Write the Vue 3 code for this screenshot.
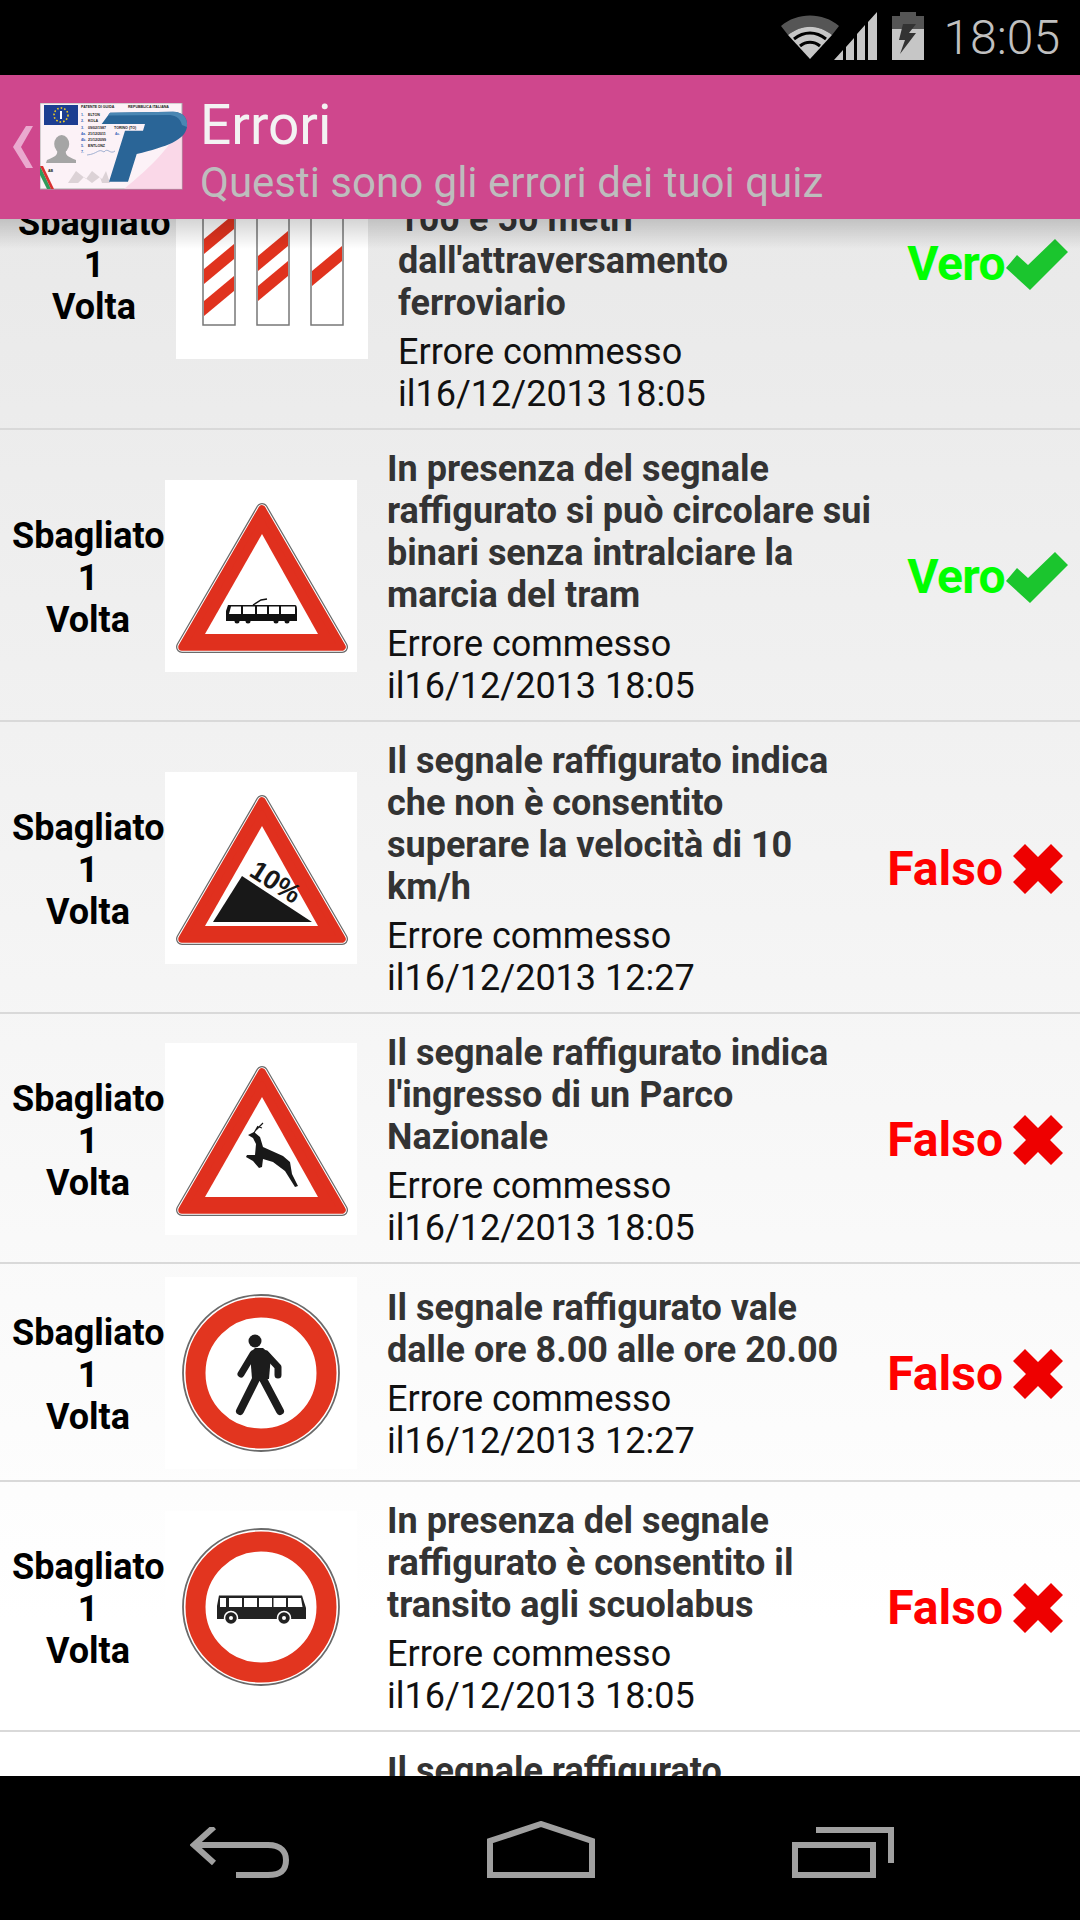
<script setup>
const rows = [
  { id: 1, first: true, sign: 'posts', title: 'Il segnale raffigurato indica\nche il passaggio a livello è tra\n100 e 50 metri\ndall\'attraversamento\nferroviario', date: '18:05', ok: true },
  { id: 2, sign: 'tram', title: 'In presenza del segnale\nraffigurato si può circolare sui\nbinari senza intralciare la\nmarcia del tram', date: '18:05', ok: true },
  { id: 3, sign: 'slope', title: 'Il segnale raffigurato indica\nche non è consentito\nsuperare la velocità di 10\nkm/h', date: '12:27', ok: false },
  { id: 4, sign: 'deer', title: 'Il segnale raffigurato indica\nl\'ingresso di un Parco\nNazionale', date: '18:05', ok: false },
  { id: 5, sign: 'walker', title: 'Il segnale raffigurato vale\ndalle ore 8.00 alle ore 20.00', date: '12:27', ok: false },
  { id: 6, sign: 'bus', title: 'In presenza del segnale\nraffigurato è consentito il\ntransito agli scuolabus', date: '18:05', ok: false },
  { id: 7, sign: 'none', title: 'Il segnale raffigurato', date: '', ok: false, tail: true }
]
const posts = [
  { x: 27, ys: [72, 102, 134] },
  { x: 81, ys: [89, 119] },
  { x: 135, ys: [104] }
]
const stripe = (x, y) => `M${x + 1} ${y} L${x + 31} ${y - 25} V${y - 10} L${x + 1} ${y + 15} Z`
</script>

<template>
  <div class="page">
    <div class="status">
      <svg class="st-wifi" width="58" height="44" viewBox="0 0 58 44">
        <path d="M0 11 C16 -3 42 -3 58 11 L51 20 C37 9 21 9 7 20 Z" fill="#555" />
        <path d="M7 20 C21 9 37 9 51 20 L29 44 Z" fill="#c6c6c6" />
        <path d="M13 24 C23 16 35 16 45 24 M19 31 C25 26 33 26 39 31" fill="none" stroke="#000" stroke-width="3" />
      </svg>
      <svg class="st-signal" width="44" height="48" viewBox="0 0 44 48">
        <path d="M0 48 L9 38 V48 Z M12 35 L20 26 V48 H12 Z M23 22 L31 13 V48 H23 Z M34 10 L43 0 V48 H34 Z" fill="#c6c6c6" />
      </svg>
      <svg class="st-batt" width="32" height="48" viewBox="0 0 32 48">
        <path d="M8 0 H24 V4 H32 V17 H0 V4 H8 Z" fill="#555" />
        <path d="M0 17 H32 V48 H0 Z" fill="#c6c6c6" />
        <path d="M24 12 L11 12 L7 28 L13 28 L8 42 L24 21 L17 21 Z" fill="#333" />
      </svg>
      <span class="clock">18:05</span>
    </div>

    <div class="bar">
      <svg class="chev" width="20" height="42" viewBox="0 0 20 42">
        <path d="M20 0 L8 21 L20 42 H13 L0 21 L13 0 Z" fill="#eaa9cf" />
      </svg>
      <svg class="logo" width="148" height="88" viewBox="0 0 148 88">
        <rect x="0" y="0" width="142" height="86" fill="#fcf2f7" stroke="#aaa" stroke-width="1" />
        <path d="M84 86 C108 66 126 50 142 22 V86 Z" fill="#f9cfe3" opacity=".75" />
        <rect x="4" y="2" width="34" height="20" fill="#1d3e91" />
        <circle cx="21" cy="12" r="7" fill="none" stroke="#f4d020" stroke-width="1.6" stroke-dasharray="1.6 2" />
        <rect x="20" y="8" width="2" height="8" fill="#fff" />
        <text x="41" y="4.5" class="lt">PATENTE DI GUIDA</text>
        <text x="88" y="4.5" class="lt">REPUBBLICA ITALIANA</text>
        <text x="41" y="12.5" class="lt n">1.</text><text x="48" y="12.5" class="lt">ELTON</text>
        <text x="41" y="18.5" class="lt n">2.</text><text x="48" y="18.5" class="lt">KOLA</text>
        <text x="41" y="25.5" class="lt n">3.</text><text x="48" y="25.5" class="lt">09/02/1987</text>
        <text x="74" y="25.5" class="lt">TORINO (TO)</text>
        <text x="41" y="31.5" class="lt n">4a.</text><text x="48" y="31.5" class="lt">21/12/2011</text>
        <text x="75" y="31.5" class="lt n">4c.</text>
        <text x="41" y="37.5" class="lt n">4b.</text><text x="48" y="37.5" class="lt">21/12/2099</text>
        <text x="41" y="43.5" class="lt n">5.</text><text x="48" y="43.5" class="lt">ENTLONZ</text>
        <text x="41" y="50" class="lt n">7.</text>
        <path d="M47 52 C58 51 58 45 64 49 C68 44 70 52 75 48" fill="none" stroke="#8aa0c8" stroke-width=".8" />
        <ellipse cx="21.7" cy="41" rx="7.5" ry="9" fill="#a5a5a5" />
        <path d="M17 47 C18 52 16 53 7 57 L6 60 H36 L36 57 C27 53 25 52 26 47 Z" fill="#a5a5a5" />
        <text x="8" y="69" class="lt">AB</text>
        <path d="M0 63 L11 86 H7 L0 72 Z" fill="#2f9a5a" />
        <path d="M0 63 L3 63 L14 86 H11 Z" fill="#d83030" />
        <path d="M28 80 L36 68 L46 76 L52 68 L62 76 L66 68 L70 80 H62 L60 74 L52 80 L44 74 L38 80 Z" fill="#dcd2d6" />
        <path d="M61.7 21 L70 9.7 L133 8.7 C143 8.7 148 15 147 24 C145 37 127 43.7 96.7 51 L88 78.7 L69 78.7 L85 27.7 L103 27.7 L105 21 Z" fill="#2a6597" />
        <path d="M70 9.7 L133 8.7 C143 8.7 148 15 147 24 L142 22 C140 14 134 12 128 12 L68 12.500 Z" fill="#4a86b3" />
      </svg>
      <div class="titles">
        <div class="t1">Errori</div>
        <div class="t2">Questi sono gli errori dei tuoi quiz</div>
      </div>
    </div>

    <div class="list">
      <div class="shade"></div>
      <div class="scroll">
        <div v-for="r in rows" :key="r.id" class="row" :class="{ first: r.first, tail: r.tail }">
          <template v-if="!r.tail">
            <div class="count">Sbagliato<br />1<br />Volta</div>
            <svg class="sign" width="192" height="192" viewBox="0 0 192 192">
              <rect width="192" height="192" fill="#fff" />
              <g v-if="r.sign === 'posts'">
                <g v-for="p in posts" :key="p.x">
                  <rect :x="p.x" y="8" width="32" height="150" fill="#fff" stroke="#777" stroke-width="1.5" />
                  <path v-for="y in p.ys" :key="y" :d="stripe(p.x, y)" fill="#e0331e" />
                </g>
              </g>
              <g v-else-if="['tram', 'slope', 'deer'].includes(r.sign)">
                <path d="M97 29 L177 167 H17 Z" fill="#6a6a6a" stroke="#6a6a6a" stroke-width="12" stroke-linejoin="round" />
                <path d="M97 29 L177 167 H17 Z" fill="#fff" stroke="#fff" stroke-width="9.500" stroke-linejoin="round" />
                <path d="M97 29 L177 167 H17 Z" fill="#e0301e" stroke="#e0301e" stroke-width="7.500" stroke-linejoin="round" />
                <path d="M97 54 L153 154 H40 Z" fill="#fff" />
                <g v-if="r.sign === 'tram'">
                  <path d="M63 125 H130 C132 125 132 128 132 132 V141 H61 V131 Z" fill="#111" />
                  <path d="M66 126.500 H76 V134 H64 Z M78 126.500 H90 V134 H78 Z M92 126.500 H102 V134 H92 Z M104 126.500 H114 V134 H104 Z M116 126.500 H130 V134 H116 Z" fill="#fff" />
                  <path d="M88 125 L96 120 L102 119" fill="none" stroke="#111" stroke-width="1.400" />
                  <circle cx="72" cy="141" r="2.500" fill="#111" /><circle cx="83" cy="141" r="2.500" fill="#111" />
                  <circle cx="111" cy="141" r="2.500" fill="#111" /><circle cx="122" cy="141" r="2.500" fill="#111" />
                </g>
                <g v-else-if="r.sign === 'slope'">
                  <path d="M77 104 L147 150 H48 Z" fill="#181818" />
                  <text x="83" y="103" class="pct" transform="rotate(33 83 103)">10%</text>
                </g>
                <g v-else>
                  <path d="M83 92 L89 89 L95 94 L98 104 L118 113 L125 119 L127 131 L133 143 L130 144 L120 128 L108 119 L98 116 L97 124 L94 125 L88 118 L81 114 L82 112 L90 112 L91 101 L88 95 Z" fill="#181818" />
                  <path d="M89 90 L93 83 M91 87 L98 80 M94 84 L97 85" fill="none" stroke="#181818" stroke-width="1.200" />
                </g>
              </g>
              <g v-else>
                <circle cx="96" cy="96" r="78" fill="#fff" stroke="#6a6a6a" stroke-width="1.800" />
                <circle cx="96" cy="96" r="65.500" fill="none" stroke="#e2351f" stroke-width="20" />
                <g v-if="r.sign === 'walker'">
                  <circle cx="90" cy="64" r="6.500" fill="#1c1c1c" />
                  <path d="M88 77 L76 97 M101 77 L113 90 L113 98" fill="none" stroke="#1c1c1c" stroke-width="7" stroke-linecap="round" stroke-linejoin="round" />
                  <path d="M90 71 H98 L106 78 L104 102 H87 L85 76 Z" fill="#1c1c1c" />
                  <path d="M92 100 L75 134 M97 100 L115 134" fill="none" stroke="#1c1c1c" stroke-width="8" stroke-linecap="round" />
                </g>
                <g v-else>
                  <path d="M54 84.500 H137 L141 97 V108 H52 V95 Z" fill="#222" />
                  <path d="M55 87 H61 V96 H55 Z M64 87 H77 V96 H64 Z M79 87 H92 V96 H79 Z M94 87 H107 V96 H94 Z M108.500 87 H121 V96 H108.500 Z M123 87 H136 L137.500 96 H123 Z" fill="#fff" />
                  <circle cx="66" cy="107" r="6.500" fill="#222" stroke="#fff" stroke-width="1.500" /><circle cx="66" cy="107" r="2" fill="#fff" />
                  <circle cx="119" cy="107" r="6.500" fill="#222" stroke="#fff" stroke-width="1.500" /><circle cx="119" cy="107" r="2" fill="#fff" />
                </g>
              </g>
            </svg>
          </template>
          <div v-else class="count ghost"></div>
          <div class="info">
            <div class="title">{{ r.title }}</div>
            <div v-if="!r.tail" class="date">Errore commesso<br />il16/12/2013 {{ r.date }}</div>
          </div>
          <div v-if="!r.tail" class="verdict" :class="r.ok ? 'yes' : 'no'">
            <span>{{ r.ok ? 'Vero' : 'Falso' }}</span>
            <svg v-if="r.ok" width="62" height="51" viewBox="0 0 62 51">
              <path d="M0 29 L11 16 L22 26 L49 0 L62 13 L24 51 Z" fill="#1bc52e" />
            </svg>
            <svg v-else width="50" height="50" viewBox="0 0 50 50">
              <path d="M12 0 L25 13 L38 0 L50 12 L37 25 L50 38 L38 50 L25 37 L12 50 L0 38 L13 25 L0 12 Z" fill="#ee0000" />
            </svg>
          </div>
        </div>
      </div>
    </div>

    <div class="nav">
      <svg width="99" height="51" viewBox="0 0 99 51">
        <path d="M24 0 L4 18 L24 36 M4 18 H78 C92 18 96 26 96 33 C96 42 92 48 78 48 H46" fill="none" stroke="#a0a0a0" stroke-width="6" />
      </svg>
      <svg width="108" height="57" viewBox="0 0 108 57">
        <path d="M3 54 V20 L54 3 L105 20 V54 Z" fill="none" stroke="#a0a0a0" stroke-width="6" />
      </svg>
      <svg width="102" height="51" viewBox="0 0 102 51">
        <path d="M3 18 H81 V48 H3 Z" fill="none" stroke="#a0a0a0" stroke-width="6" />
        <path d="M24 3 H99 V36" fill="none" stroke="#a0a0a0" stroke-width="6" />
      </svg>
    </div>
  </div>
</template>

<style scoped>
.page {
  width: 1080px;
  height: 1920px;
  display: flex;
  flex-direction: column;
  overflow: hidden;
  background: #000;
  font-family: Roboto, "Liberation Sans", sans-serif;
}
.status {
  height: 75px;
  flex: none;
  box-sizing: border-box;
  display: flex;
  align-items: flex-start;
  background: #000;
  padding-right: 20px;
  justify-content: flex-end;
}
.st-wifi { margin-top: 15px; margin-right: -5px; }
.st-signal { margin-top: 12px; margin-right: 14px; }
.st-batt { margin-top: 12px; margin-right: 19px; }
.clock {
  font-size: 48px;
  line-height: 56px;
  margin-top: 10px;
  color: #c0c0c0;
  font-weight: 300;
}
.bar {
  height: 144px;
  flex: none;
  background: #cf478d;
  display: flex;
  align-items: flex-start;
  position: relative;
  z-index: 2;
}
.chev { margin: 51px 0 0 13px; }
.logo { margin: 28px 0 0 7px; }
.titles { margin: 18px 0 0 12px; }
.t1 { font-size: 55px; line-height: 64px; color: #f3f3f3; }
.t2 { font-size: 42px; line-height: 49px; color: #bdbdbd; margin-top: 1px; }
.list {
  flex: 1;
  min-height: 0;
  overflow: hidden;
  position: relative;
  background: linear-gradient(#e9e9e9, #ffffff 1400px);
}
.shade {
  position: absolute;
  left: 0;
  right: 0;
  top: 0;
  height: 30px;
  z-index: 1;
  background: linear-gradient(rgba(0, 0, 0, 0.17), rgba(0, 0, 0, 0));
}
.scroll { margin-top: -123px; }
.row {
  display: flex;
  align-items: center;
  box-sizing: border-box;
  padding: 18px 0 13px 12px;
  border-bottom: 2px solid #d9d9d9;
}
.row.first { padding-left: 18px; }
.row.first .sign { margin-left: 6px; }
.row.tail { align-items: flex-start; border: 0; }
.count {
  width: 152px;
  flex: none;
  text-align: center;
  font-size: 36px;
  line-height: 42px;
  font-weight: 700;
  color: #000;
  white-space: nowrap;
}
.ghost { width: 345px; }
.sign { flex: none; margin: -5px 0 -2px 1px; display: block; }
.info { margin-left: 30px; flex: 1; min-width: 0; }
.title {
  font-size: 36px;
  line-height: 42px;
  font-weight: 700;
  color: #333;
  white-space: pre-line;
}
.date {
  margin-top: 7px;
  font-size: 36px;
  line-height: 42px;
  color: #111;
  white-space: nowrap;
}
.verdict {
  display: flex;
  align-items: center;
  flex: none;
  font-size: 48px;
  line-height: 56px;
  font-weight: 700;
}
.verdict.yes { color: #00ff00; gap: 1px; padding-right: 12px; margin-top: -1px; letter-spacing: -0.6px; }
.verdict.no { color: #ff0000; gap: 10px; padding-right: 17px; margin-top: -1px; }
.nav {
  height: 144px;
  flex: none;
  box-sizing: border-box;
  background: #000;
  position: relative;
  z-index: 2;
  display: flex;
  align-items: flex-end;
  padding: 0 186px 42px 190px;
  justify-content: space-between;
}
.lt { font-family: "Liberation Sans", sans-serif; font-size: 3.6px; font-weight: 700; fill: #222; }
.n { fill: #2d5fb5; }
.pct { font-family: "Liberation Sans", sans-serif; font-size: 27px; font-weight: 700; fill: #181818; }
</style>
